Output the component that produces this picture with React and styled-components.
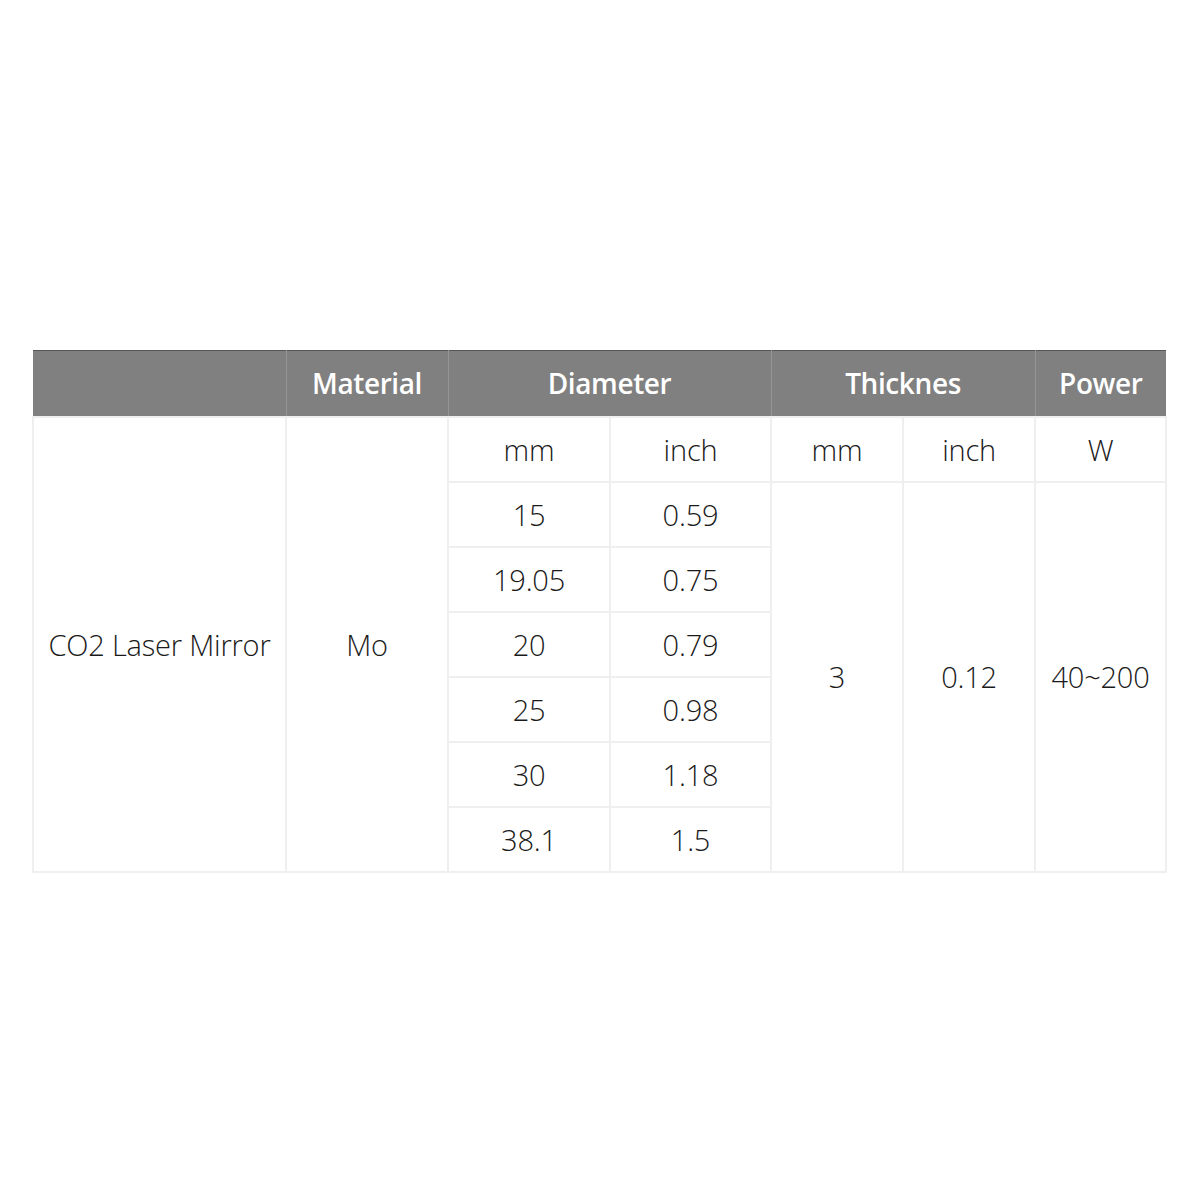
import React from "react";
import styled, { createGlobalStyle } from "styled-components";

const Global = createGlobalStyle`
  html, body { margin: 0; padding: 0; background: #fff; }
  body { font-family: "Open Sans", "Noto Sans", "DejaVu Sans", sans-serif; }
`;

const Page = styled.div`
  width: 1200px;
  height: 1200px;
  box-sizing: border-box;
  padding: 350px 0 0 32px;
  background: #fff;
`;

const Table = styled.table`
  width: 1133px;
  table-layout: fixed;
  border-collapse: collapse;
  font-family: "Open Sans", "Noto Sans", sans-serif;
`;

const HeadRow = styled.tr`
  height: 66px;
  background: #808080;
  border-top: 1px solid #555;
  border-bottom: 1px solid #666;
`;

const Th = styled.th`
  color: #fff;
  font-size: 28px;
  font-weight: 600;
  letter-spacing: -0.4px;
  text-align: center;
  padding: 0;
  border-left: 1px solid #959595;
  border-right: 1px solid #959595;
  &:first-child { border-left: none; }
  &:last-child { border-right: none; }
`;

const Row = styled.tr`
  height: 65px;
`;

const Td = styled.td`
  color: #1a1a1a;
  font-size: 29px;
  font-weight: 300;
  letter-spacing: -0.2px;
  text-align: center;
  vertical-align: middle;
  padding: 0;
  border: 2px solid #efefef;
`;

const diam = [
  ["15", "0.59"],
  ["19.05", "0.75"],
  ["20", "0.79"],
  ["25", "0.98"],
  ["30", "1.18"],
  ["38.1", "1.5"],
];

export default function App() {
  return (
    <>
      <Global />
      <Page>
        <Table>
          <colgroup>
            <col style={{ width: 253 }} />
            <col style={{ width: 162 }} />
            <col style={{ width: 162 }} />
            <col style={{ width: 161 }} />
            <col style={{ width: 132 }} />
            <col style={{ width: 132 }} />
            <col style={{ width: 131 }} />
          </colgroup>
          <thead>
            <HeadRow>
              <Th></Th>
              <Th>Material</Th>
              <Th colSpan={2}>Diameter</Th>
              <Th colSpan={2}>Thicknes</Th>
              <Th>Power</Th>
            </HeadRow>
          </thead>
          <tbody>
            <Row>
              <Td rowSpan={7}>CO2 Laser Mirror</Td>
              <Td rowSpan={7}>Mo</Td>
              <Td>mm</Td>
              <Td>inch</Td>
              <Td>mm</Td>
              <Td>inch</Td>
              <Td>W</Td>
            </Row>
            {diam.map(([mm, inch], i) => (
              <Row key={mm}>
                <Td>{mm}</Td>
                <Td>{inch}</Td>
                {i === 0 && (
                  <>
                    <Td rowSpan={6}>3</Td>
                    <Td rowSpan={6}>0.12</Td>
                    <Td rowSpan={6}>40~200</Td>
                  </>
                )}
              </Row>
            ))}
          </tbody>
        </Table>
      </Page>
    </>
  );
}
